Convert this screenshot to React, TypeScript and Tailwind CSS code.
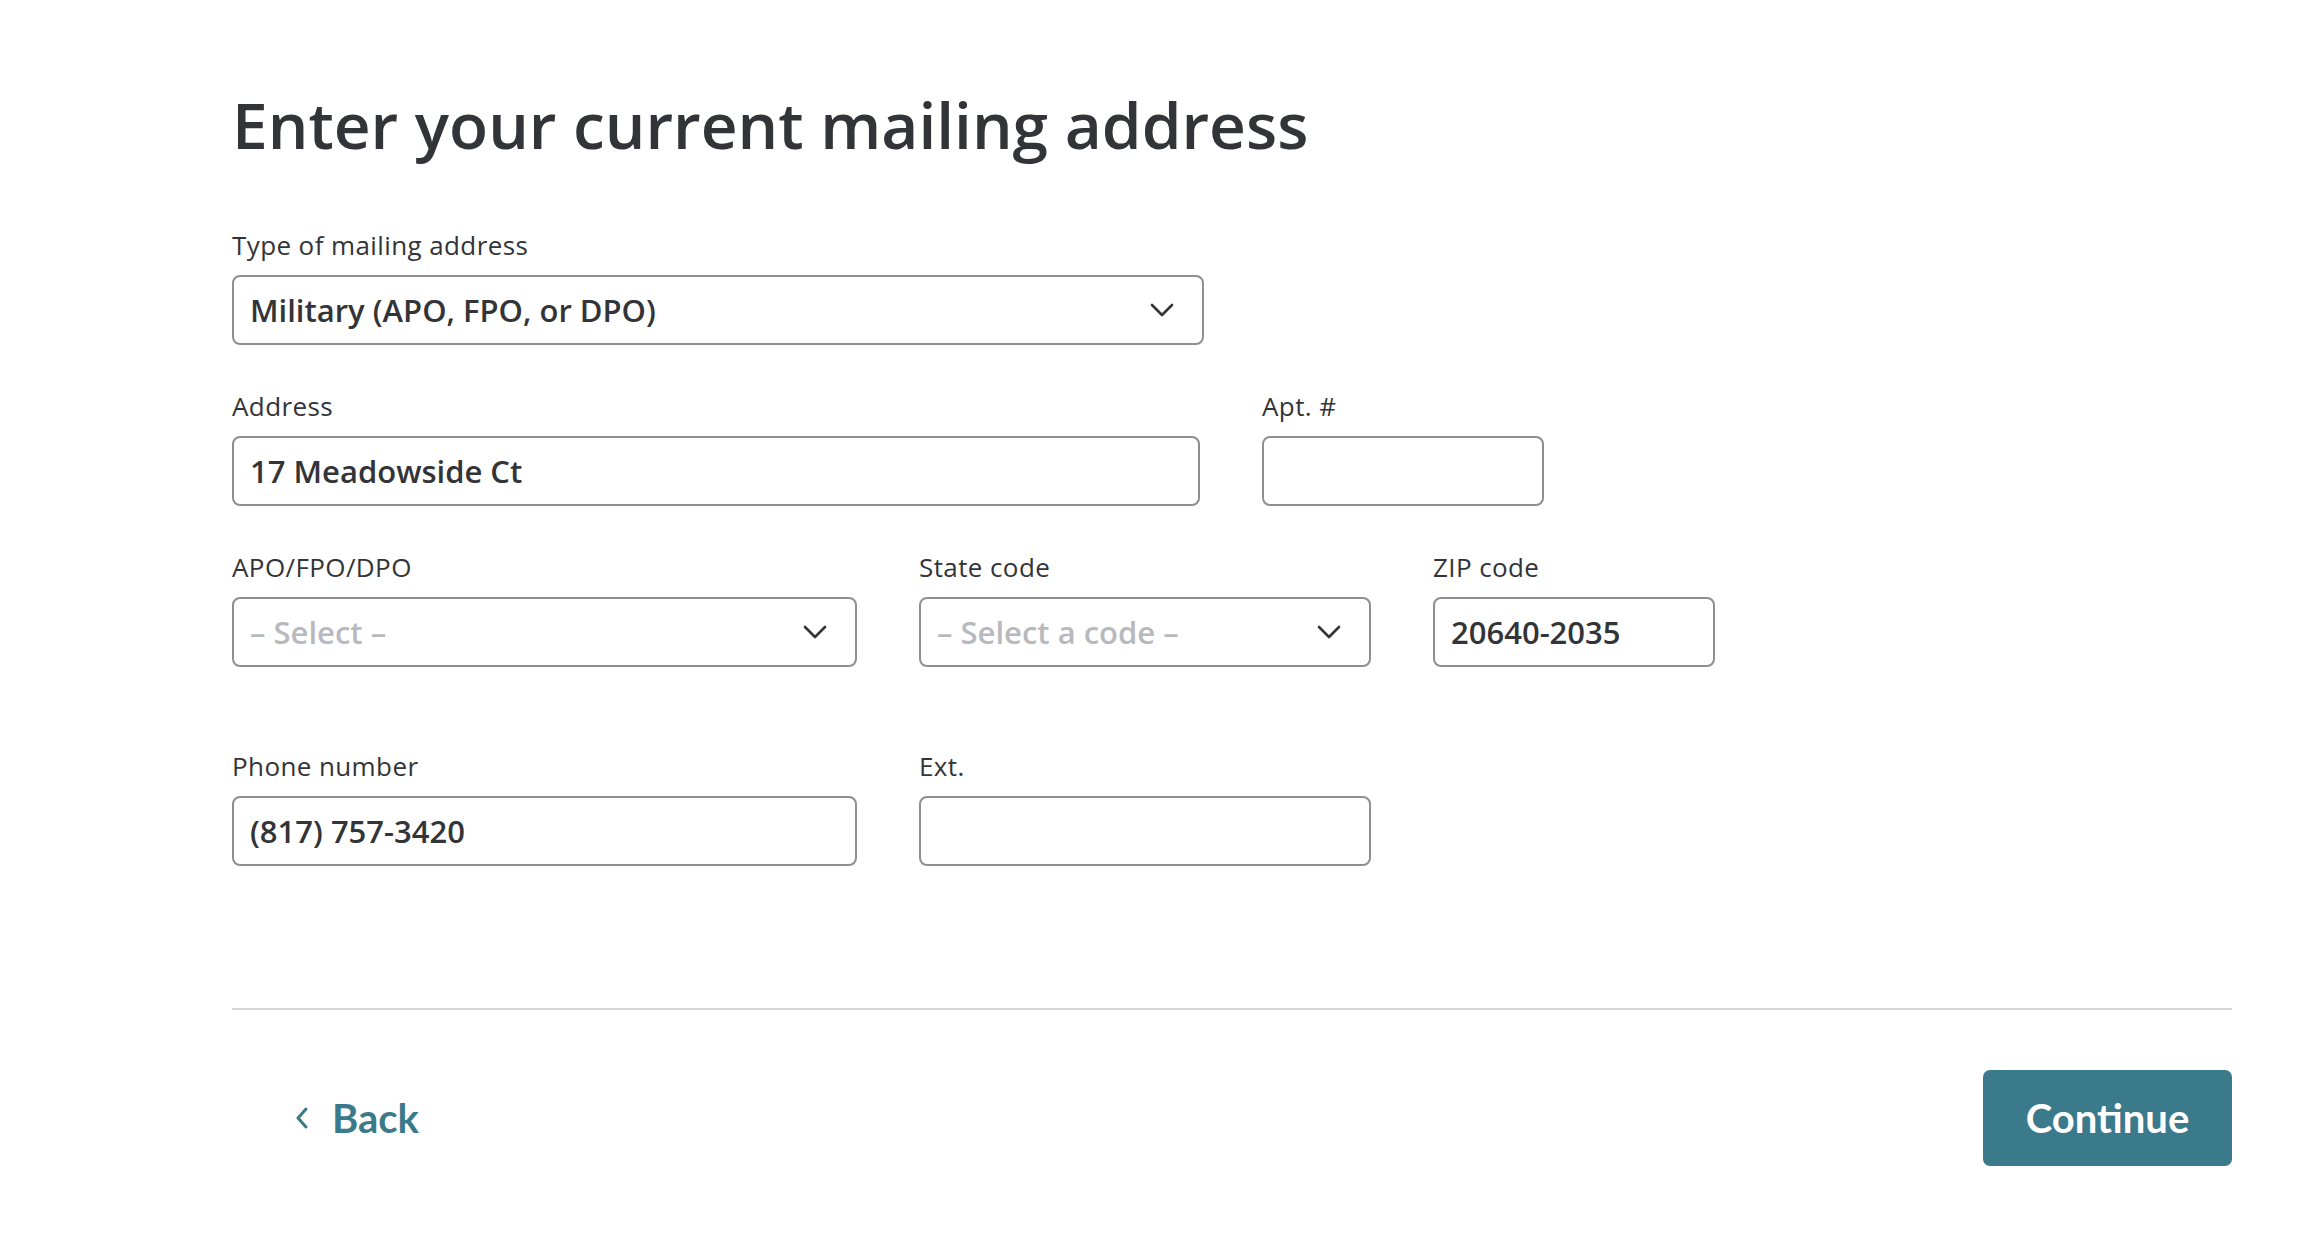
import React from "react";

const lato = { fontFamily: "Lato, 'Open Sans', sans-serif" };
const open = { fontFamily: "'Open Sans', Lato, sans-serif" };

function Chevron() {
  return (
    <svg width="24" height="14" viewBox="0 0 24 14" fill="none" className="shrink-0">
      <path d="M2 2l10 10L22 2" stroke="#333438" strokeWidth="2.6" strokeLinecap="round" strokeLinejoin="round" />
    </svg>
  );
}

function Field({ label, width, value, placeholder, select }: { label: string; width: string; value?: string; placeholder?: string; select?: boolean }) {
  return (
    <div className={`flex flex-col gap-[14px] ${width}`}>
      <label className="text-[26px] leading-[32px] tracking-[0.4px] text-[#333438]" style={open}>{label}</label>
      <div className="flex h-[70px] items-center justify-between rounded-[8px] border-2 border-[#8e8e93] pl-[16px] pr-[28px] bg-white">
        {value ? (
          <span className="text-[31px] font-semibold text-[#333438]" style={open}>{value}</span>
        ) : (
          <span className="text-[31px] font-semibold text-[#b8b9be]" style={open}>{placeholder}</span>
        )}
        {select && <Chevron />}
      </div>
    </div>
  );
}

export default function App() {
  return (
    <div className="min-h-[1234px] w-[2318px] bg-white pl-[232px] pr-[86px] pt-[86px]" style={lato}>
      <h1 className="text-[64px] font-semibold leading-[77px] text-[#333438]" style={open}>
        Enter your current mailing address
      </h1>

      <div className="mt-[66px] flex flex-col">
        <Field label="Type of mailing address" width="w-[972px]" value="Military (APO, FPO, or DPO)" select />

        <div className="mt-[45px] flex gap-[62px]">
          <Field label="Address" width="w-[968px]" value="17 Meadowside Ct" />
          <Field label="Apt. #" width="w-[282px]" />
        </div>

        <div className="mt-[45px] flex gap-[62px]">
          <Field label="APO/FPO/DPO" width="w-[625px]" placeholder="– Select –" select />
          <Field label="State code" width="w-[452px]" placeholder="– Select a code –" select />
          <Field label="ZIP code" width="w-[282px]" value="20640-2035" />
        </div>

        <div className="mt-[83px] flex gap-[62px]">
          <Field label="Phone number" width="w-[625px]" value="(817) 757-3420" />
          <Field label="Ext." width="w-[452px]" />
        </div>
      </div>

      <div className="mt-[142px] h-[2px] w-[2000px] bg-[#d6d5da]" />

      <div className="mt-[60px] flex w-[2000px] items-center justify-between">
        <button className="ml-[62px] flex items-center gap-[22px] text-[#3b7a8a]">
          <svg width="16" height="24" viewBox="0 0 16 24" fill="none">
            <path d="M12 3L4 12l8 9" stroke="#3b7a8a" strokeWidth="3" strokeLinecap="round" strokeLinejoin="round" />
          </svg>
          <span className="text-[40px] font-bold">Back</span>
        </button>
        <button className="flex h-[96px] w-[249px] items-center justify-center rounded-[7px] bg-[#3b7a8a] text-[40px] font-bold text-white">
          Continue
        </button>
      </div>
    </div>
  );
}
